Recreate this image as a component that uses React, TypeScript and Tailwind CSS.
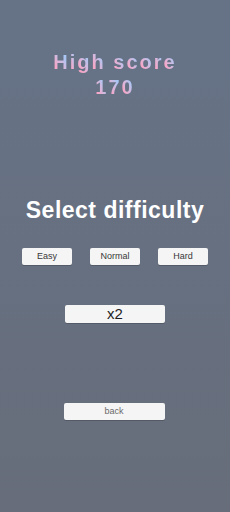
import React from 'react';

const FONT = { fontFamily: '"Liberation Sans", Arial, sans-serif' };

// 分數標題：每個字元各自一個斜向漸層（右上藍、左下粉）
function GradientLine({ text }: { text: string }) {
  return (
    <span className="block whitespace-pre">
      {text.split('').map((ch, i) => (
        <span
          key={i}
          className="inline-block bg-gradient-to-bl from-[#a9c6f4] from-30% to-[#f6a7c8] to-75% bg-clip-text text-transparent"
        >
          {ch}
        </span>
      ))}
    </span>
  );
}

function DiffButton({ label }: { label: string }) {
  return (
    <button className="w-[50px] h-[17px] rounded-[2px] bg-[#f5f5f5] text-[9px] leading-[17px] text-[#383838] shadow-[0_1px_0_rgba(0,0,0,0.18)]">
      {label}
    </button>
  );
}

export default function App() {
  const difficulties = ['Easy', 'Normal', 'Hard'];

  return (
    <main
      style={FONT}
      className="w-[230px] h-[512px] overflow-hidden flex flex-col items-center bg-gradient-to-b from-[#667387] to-[#676d7a]"
    >
      <div className="mt-[50px] text-center text-[20px] leading-[25px] font-bold tracking-[2px]">
        <GradientLine text="High score" />
        <GradientLine text="170" />
      </div>

      <h1 className="mt-[96px] text-[23px] leading-[28px] font-bold tracking-[0.5px] text-white">
        Select difficulty
      </h1>

      <div className="mt-[24px] flex gap-[18px]">
        {difficulties.map((d) => (
          <DiffButton key={d} label={d} />
        ))}
      </div>

      <button className="mt-[40px] w-[100px] h-[18px] rounded-[2px] bg-[#f5f5f5] text-[15px] leading-[18px] text-[#1e1e1e] shadow-[0_1px_0_rgba(0,0,0,0.18)]">
        x2
      </button>

      <button className="mt-[80px] -ml-[2px] w-[101px] h-[17px] rounded-[2px] bg-[#f5f5f5] text-[9px] leading-[17px] text-[#6a6a6a] shadow-[0_1px_0_rgba(0,0,0,0.18)]">
        back
      </button>
    </main>
  );
}
